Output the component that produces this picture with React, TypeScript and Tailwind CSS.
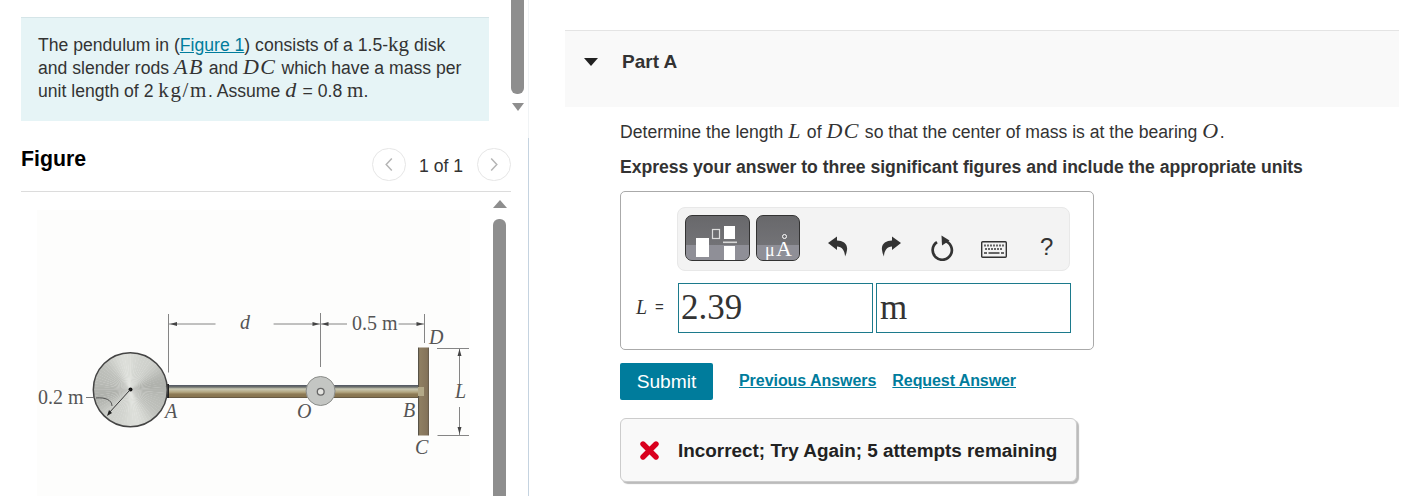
import type { ReactNode } from 'react'

const serif = "font-['Liberation_Serif',serif]"

// math bits in the question text are set in a serif face
function MathI({ children }: { children: ReactNode }) {
  return <span className={`${serif} italic text-[22px] leading-none tracking-[1.5px]`}>{children}</span>
}

function MathR({ children, wide }: { children: ReactNode; wide?: boolean }) {
  return <span className={`${serif} text-[21px] leading-none ${wide ? 'tracking-[1.6px]' : ''}`}>{children}</span>
}

function Wedges() {
  const cx = 130.3
  const cy = 389.7
  const r = 37
  const n = 72
  return (
    <g>
      {Array.from({ length: n }).map((_, i) => {
        const a0 = (i / n) * Math.PI * 2
        const a1 = ((i + 1) / n) * Math.PI * 2 + 0.01
        const mid = (a0 + a1) / 2
        const v = Math.round(198 - 20 * Math.cos(2 * mid) + 4 * Math.sin(6 * mid))
        const fill = `rgb(${v},${v + 2},${v - 3})`
        const d = `M${cx} ${cy}L${cx + r * Math.cos(a0)} ${cy + r * Math.sin(a0)}A${r} ${r} 0 0 1 ${cx + r * Math.cos(a1)} ${cy + r * Math.sin(a1)}Z`
        return <path key={i} d={d} fill={fill} />
      })}
    </g>
  )
}

function Arrow({ x, y, dir }: { x: number; y: number; dir: 'l' | 'r' | 'u' | 'd' }) {
  const pts = {
    l: `${x},${y} ${x + 7},${y - 2} ${x + 7},${y + 2}`,
    r: `${x},${y} ${x - 7},${y - 2} ${x - 7},${y + 2}`,
    u: `${x},${y} ${x - 2},${y + 7} ${x + 2},${y + 7}`,
    d: `${x},${y} ${x - 2},${y - 7} ${x + 2},${y - 7}`,
  }
  return <polygon points={pts[dir]} fill="#444" />
}

function Pendulum() {
  const labelCls = 'fill-[#555]'
  return (
    <svg viewBox="21 192 472 304" className="h-[304px] w-[472px] shrink-0">
      <defs>
        <linearGradient id="rod" x1="0" y1="0" x2="0" y2="1">
          <stop offset="0" stopColor="#4f5563" />
          <stop offset="0.16" stopColor="#6f726d" />
          <stop offset="0.3" stopColor="#c9c9b4" />
          <stop offset="0.55" stopColor="#b3a680" />
          <stop offset="0.7" stopColor="#8d7a55" />
          <stop offset="0.92" stopColor="#86734f" />
          <stop offset="1" stopColor="#4a4238" />
        </linearGradient>
        <linearGradient id="bar" x1="0" y1="0" x2="1" y2="0">
          <stop offset="0" stopColor="#3f3f3b" />
          <stop offset="0.15" stopColor="#8f7f62" />
          <stop offset="0.85" stopColor="#84735a" />
          <stop offset="1" stopColor="#5e5548" />
        </linearGradient>
      </defs>
      <rect x="37" y="210" width="433" height="286" fill="#fdfdfc" />

      {/* rod and T bar */}
      <rect x="165" y="385" width="256" height="13" fill="url(#rod)" />
      <rect x="418" y="347.5" width="11" height="88" fill="url(#bar)" />
      <rect x="418" y="387" width="6" height="9" fill="#b3a988" />
      <path d="M166 384 L169 384 L169 398 L164 398 Z" fill="#222" />

      {/* disk */}
      <Wedges />
      <circle cx="130.3" cy="389.7" r="37" fill="none" stroke="#444" strokeWidth="1.5" />
      <circle cx="130.5" cy="389.4" r="2" fill="#111" />
      <path d="M130.5 389.4 L109 413" stroke="#333" strokeWidth="1" />
      <polygon points="107,416 109,410 112,413" fill="#222" />
      <path d="M96 398 C105 397 112 400 112 406" fill="none" stroke="#444" strokeWidth="0.9" />
      <path d="M86 397.5 L95 397.5" stroke="#666" strokeWidth="0.9" />

      {/* bearing */}
      <circle cx="320.6" cy="391" r="14.5" fill="#c4c6c3" stroke="#8a8c89" strokeWidth="1" />
      <circle cx="320.7" cy="391.7" r="3.4" fill="#e4e4e0" stroke="#666" strokeWidth="1.3" />

      {/* dimension lines */}
      <g stroke="#777" strokeWidth="0.9" fill="none">
        <path d="M168.5 314V372.5" />
        <path d="M320.5 313V367" />
        <path d="M424.5 314V343" />
        <path d="M169 324H215.5" />
        <path d="M273.6 324H320" />
        <path d="M321 324H347" />
        <path d="M398.6 324H424" />
        <path d="M437 348.5H469" />
        <path d="M437.5 435.5H469" />
        <path d="M459.5 349V384" />
        <path d="M459.5 407V435" />
      </g>
      <Arrow x={170} y={324} dir="l" />
      <Arrow x={319.5} y={324} dir="r" />
      <Arrow x={321.5} y={324} dir="l" />
      <Arrow x={423.5} y={324} dir="r" />
      <Arrow x={459.5} y={349} dir="u" />
      <Arrow x={459.5} y={434} dir="d" />

      {/* labels */}
      <g className="font-['Liberation_Serif',serif]" fontSize="20">
        <text x="38" y="404" className={labelCls}>0.2 m</text>
        <text x="352" y="330" className={labelCls}>0.5 m</text>
      </g>
      <g className="font-['Liberation_Serif',serif] italic" fontSize="20">
        <text x="240" y="329" className={labelCls}>d</text>
        <text x="165" y="418" className={labelCls}>A</text>
        <text x="297" y="418" className={labelCls}>O</text>
        <text x="403" y="417" className={labelCls}>B</text>
        <text x="429" y="344" className={labelCls}>D</text>
        <text x="415" y="454" className={labelCls}>C</text>
        <text x="455" y="398" className={labelCls}>L</text>
      </g>
    </svg>
  )
}

function TemplatesButton() {
  return (
    <div className="relative h-[46px] w-[65px] overflow-hidden rounded-[7px] border border-[#333] bg-[linear-gradient(#68686b,#78787c)]">
      <div className="absolute inset-x-0 bottom-0 h-[15px] bg-[#8f8f97]" />
      <svg viewBox="0 0 63 44" className="absolute inset-0 h-full w-full">
        <rect x="10" y="22" width="13" height="19" fill="#fff" />
        <rect x="26.5" y="13.5" width="7" height="9" fill="none" stroke="#ddd" strokeWidth="1.2" />
        <rect x="38" y="10" width="11" height="13" fill="#fff" />
        <rect x="37" y="25.5" width="14" height="1.6" fill="#d8d8d8" />
        <rect x="38" y="30" width="11" height="14" fill="#fff" />
      </svg>
    </div>
  )
}

function SymbolsButton() {
  return (
    <div className="relative h-[46px] w-[44px] overflow-hidden rounded-[7px] border border-[#333] bg-[linear-gradient(#68686b,#78787c)]">
      <div className="absolute inset-x-0 bottom-0 h-[15px] bg-[#8f8f97]" />
      <span className={`absolute bottom-[0px] left-[8px] ${serif} text-[18px] leading-[20px] text-white`}>μ</span>
      <span className={`absolute bottom-[0px] left-[19px] ${serif} text-[22px] leading-[22px] text-white`}>A</span>
      <span className="absolute left-[25px] top-[18px] h-[5px] w-[5px] rounded-full border border-white" />
    </div>
  )
}

function UndoIcon({ flip }: { flip?: boolean }) {
  return (
    <svg viewBox="0 0 20 21" className={`h-[21px] w-[20px] ${flip ? '-scale-x-100' : ''}`}>
      <path d="M0 7 L9 0.5 V4.5 C15 4.5 20 8 19 14 C18.7 16.5 18 18.5 17 20.5 C17 15 14 10.5 9 10.5 V14 Z" fill="#333" />
    </svg>
  )
}

function KeyboardIcon() {
  return (
    <svg viewBox="0 0 26 17" className="h-[17px] w-[26px]">
      <rect x="0.7" y="0.7" width="24.6" height="15.6" rx="1" fill="#f3f3f3" stroke="#333" strokeWidth="1.4" />
      <g fill="#666">
        {[3, 6, 9, 12, 15, 18, 21].map((x) => (
          <rect key={x} x={x} y="3.5" width="2" height="2" />
        ))}
        {[4, 7, 10, 13, 16, 19].map((x) => (
          <rect key={x} x={x} y="7" width="2" height="2" />
        ))}
        <rect x="3" y="11" width="3" height="2" />
        <rect x="7.5" y="11" width="11" height="2" />
        <rect x="20" y="11" width="3" height="2" />
      </g>
    </svg>
  )
}

function ResetIcon() {
  return (
    <svg viewBox="0 0 23 26" className="h-[26px] w-[23px]">
      <path d="M13.5 5.8A9.6 9.6 0 1 1 6 7.1" fill="none" stroke="#333" strokeWidth="2.7" />
      <polygon points="10.5,0.5 18.5,5.5 11,10.5" fill="#333" />
    </svg>
  )
}

export default function App() {
  return (
    <div className="flex h-[496px] w-[1415px] overflow-hidden bg-white font-['Liberation_Sans',Arial,sans-serif] text-[17.6px] text-[#333]">
      {/* left column */}
      <div className="w-[528px] shrink-0 pl-[21px]">
        <div className="flex h-[138px] items-start">
          <div className="mt-[17px] h-[104px] w-[468px] border-t border-[#d5e5e8] bg-[#e6f4f6] pl-[17px] pt-[16px] text-[#333]">
            <p className="h-[22px] leading-[22px]">
              The pendulum in (<span className="text-[#007c9c] underline">Figure 1</span>) consists of a 1.5-<MathR>kg</MathR> disk
            </p>
            <p className="h-[22px] leading-[22px]">
              and slender rods <MathI>AB</MathI> and <MathI>DC</MathI> which have a mass per
            </p>
            <p className="mt-[1px] h-[22px] leading-[22px]">
              unit length of 2 <MathR wide>kg/m</MathR>. Assume <MathI>d</MathI> = 0.8 <MathR>m</MathR>.
            </p>
          </div>
          <div className="ml-[22px] flex w-[13px] flex-col items-center">
            <div className="h-[94px] w-[13px] rounded-b-[6px] bg-[#8e8e8e]" />
            <div className="mt-[9px] h-0 w-0 border-x-[6px] border-t-[8px] border-x-transparent border-t-[#8e8e8e]" />
          </div>
        </div>

        <div className="flex h-[54px] w-[490px] items-start justify-between border-b border-[#dcdcdc] pt-[10px]">
          <h2 className="mt-[1px] text-[21.3px] font-bold leading-none text-black">Figure</h2>
          <div className="flex items-center">
            <div className="flex h-[33px] w-[34px] items-center justify-center rounded-full border border-[#e6e6e6] text-[#b5b5b5]">
              <svg viewBox="0 0 10 16" className="h-[15px] w-[10px]"><path d="M8 1.5 2 8l6 6.5" fill="none" stroke="currentColor" strokeWidth="1.6" /></svg>
            </div>
            <span className="ml-[13px] mr-[14px] mt-[3px] text-[17.6px]">1 of 1</span>
            <div className="flex h-[33px] w-[34px] items-center justify-center rounded-full border border-[#e6e6e6] text-[#b5b5b5]">
              <svg viewBox="0 0 10 16" className="h-[15px] w-[10px]"><path d="M2 1.5 8 8l-6 6.5" fill="none" stroke="currentColor" strokeWidth="1.6" /></svg>
            </div>
          </div>
        </div>

        <div className="flex">
          <Pendulum />
          <div className="flex w-[13px] shrink-0 flex-col items-center pt-[8px]">
            <div className="h-0 w-0 border-x-[7px] border-b-[8px] border-x-transparent border-b-[#8e8e8e]" />
            <div className="mt-[11px] h-[300px] w-[13px] rounded-t-[6px] bg-[#8e8e8e]" />
          </div>
        </div>
      </div>

      {/* divider */}
      <div className="flex w-[2px] shrink-0 flex-col">
        <div className="h-[138px] border-l border-[#f0f3f5]" />
        <div className="flex-1 border-l border-[#c5d3e0]" />
      </div>

      {/* right column */}
      <div className="flex-1 pl-[35px] pr-[16px] pt-[30px]">
        <div className="flex h-[77px] items-start border-t border-[#e4e4e4] bg-[#f9f9f9] pt-[20px]">
          <div className="ml-[19px] mt-[7px] h-0 w-0 border-x-[7px] border-t-[8px] border-x-transparent border-t-[#222]" />
          <span className="ml-[24px] text-[19px] font-bold leading-[22px] text-[#333]">Part A</span>
        </div>

        <div className="pl-[55px]">
          <p className="mt-[13px] h-[24px] leading-[24px]">
            Determine the length <MathI>L</MathI> of <MathI>DC</MathI> so that the center of mass is at the bearing <MathI>O</MathI>.
          </p>
          <p className="mt-[12px] font-bold leading-[22px] tracking-[-0.03px]">
            Express your answer to three significant figures and include the appropriate units
          </p>

          <div className="mt-[13px] h-[159px] w-[474px] rounded-[5px] border border-[#aaa] pl-[56px] pt-[15px]">
            <div className="flex h-[64px] w-[393px] items-start rounded-[8px] border border-[#e8e8e8] bg-[#f3f3f3] pl-[7px] pt-[7px]">
              <TemplatesButton />
              <div className="ml-[6px]"><SymbolsButton /></div>
              <div className="ml-[28px] mt-[21px]"><UndoIcon /></div>
              <div className="ml-[33px] mt-[21px]"><UndoIcon flip /></div>
              <div className="ml-[30px] mt-[20px]"><ResetIcon /></div>
              <div className="ml-[27px] mt-[26px]"><KeyboardIcon /></div>
              <span className="ml-[33px] mt-[20px] text-[24px] leading-[24px] text-[#333]">?</span>
            </div>
            <div className="relative mt-[12px] flex gap-[3px] pl-[1px]">
              <span className={`absolute left-[-41px] top-[13px] ${serif} text-[20px] italic leading-[22px]`}>L</span>
              <span className="absolute left-[-22px] top-[13px] text-[15px] leading-[22px]">=</span>
              <div className={`h-[50px] w-[195px] border border-[#1c7a8c] pl-[2px] ${serif} text-[35px] leading-[48px] text-[#333]`}>2.39</div>
              <div className={`h-[50px] w-[195px] border border-[#1c7a8c] pl-[3px] ${serif} text-[35px] leading-[48px] text-[#333]`}>m</div>
            </div>
          </div>

          <div className="mt-[13px] flex items-start">
            <button className="h-[37px] w-[93px] rounded-[2px] bg-[#007c9c] pt-[2px] text-[19.2px] text-white">Submit</button>
            <a className="ml-[26px] mt-[7px] text-[16px] font-bold leading-[22px] tracking-[-0.05px] text-[#007c9c] underline">Previous Answers</a>
            <a className="ml-[16px] mt-[7px] text-[16px] font-bold leading-[22px] tracking-[-0.08px] text-[#007c9c] underline">Request Answer</a>
          </div>

          <div className="mt-[18px] flex h-[64px] w-[457px] items-center rounded-[6px] border border-[#ccc] bg-[#f9f9f9] pl-[19px] shadow-[2px_2px_1px_#bbb]">
            <svg viewBox="0 0 19 19" className="h-[19px] w-[19px]">
              <path d="M3 3 16 16M16 3 3 16" stroke="#d9001e" strokeWidth="5.4" strokeLinecap="round" />
            </svg>
            <span className="ml-[19px] mt-[3px] text-[18.9px] font-bold text-[#222]">Incorrect; Try Again; 5 attempts remaining</span>
          </div>
        </div>
      </div>
    </div>
  )
}
